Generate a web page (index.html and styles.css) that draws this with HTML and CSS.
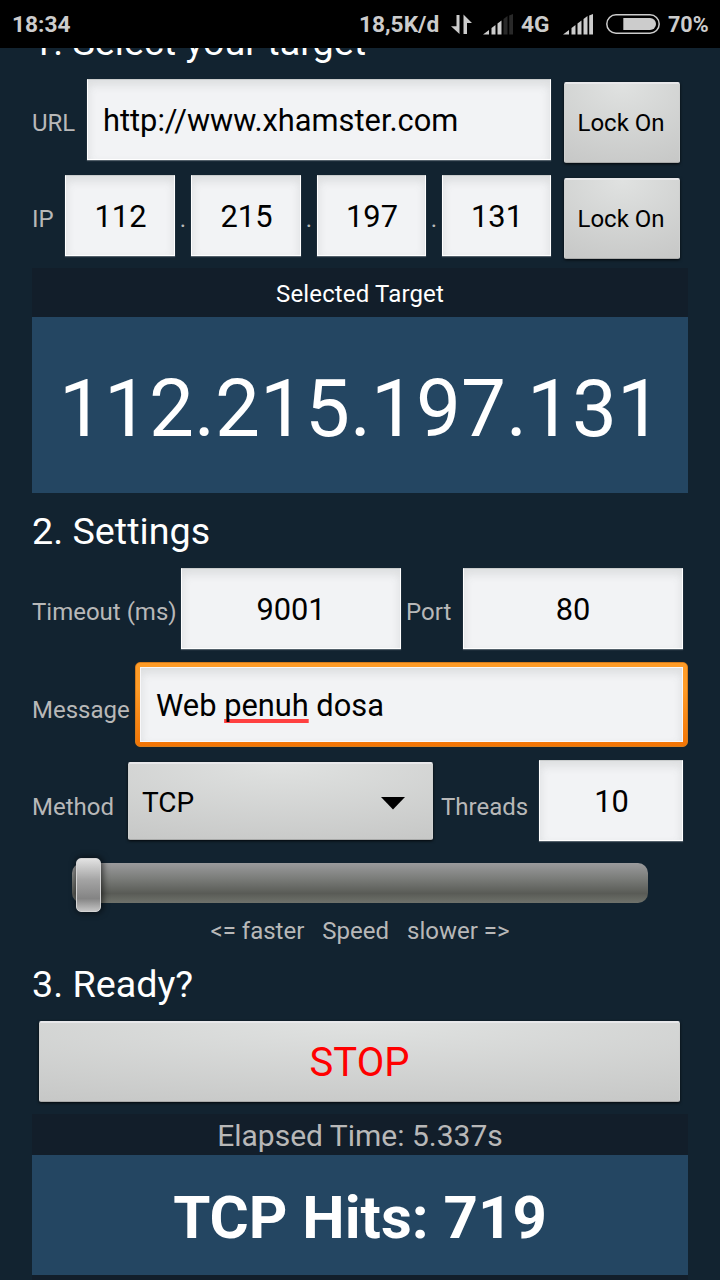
FILE: index.html
```html
<!DOCTYPE html>
<html lang="en">
<head>
<meta charset="utf-8">
<title>Settings</title>
<link rel="stylesheet" href="styles.css">
</head>
<body>
<header class="status">
  <span class="clock">18:34</span>
  <span class="rate">18,5K/d</span>
  <svg class="arrows" width="22" height="22" viewBox="0 0 22 22"><path d="M5.500 1h3v19L0 12.200h5.500zM12.500 20V0.500L21 9h-5v11z" fill="#ccc"/></svg>
  <svg class="signal" width="30" height="22" viewBox="0 0 30 22"><path d="M0 20.500L6 16v4.500zM8.500 14l4-3v9.500h-4zM14.500 9.500l4-3v14h-4z" fill="#ccc"/><path d="M20.500 5l4-3v18.500h-4zM26.200 1.500l3.800-1.500v20.500h-3.800z" fill="#292929"/></svg>
  <span class="net">4G</span>
  <svg class="signal2" width="30" height="22" viewBox="0 0 30 22"><path d="M0 20.500L6 16v4.500zM8.500 14l4-3v9.500h-4zM14.500 9.500l4-3v14h-4zM20.500 5l4-3v18.500h-4zM26.200 1.500l3.800-1.500v20.500h-3.800z" fill="#ccc"/></svg>
  <svg class="battery" width="54" height="20" viewBox="0 0 54 20"><rect x=".8" y=".8" width="52.400" height="18.400" rx="9.200" fill="none" stroke="#ccc" stroke-width="1.500"/><path d="M17.300 4H44a6 6 0 0 1 0 12H17.300z" fill="#ccc"/></svg>
  <span class="percent">70%</span>
</header>
<main class="page">
  <div class="clip"><h2 class="title title-first">1. Select your target</h2></div>

  <div class="row row-url">
    <label class="label label-url">URL</label>
    <input class="field url" value="http://www.xhamster.com">
    <button class="button lock">Lock On</button>
  </div>

  <div class="row row-ip">
    <label class="label label-ip">IP</label>
    <input class="field octet" value="112"><span class="dot">.</span>
    <input class="field octet" value="215"><span class="dot">.</span>
    <input class="field octet" value="197"><span class="dot">.</span>
    <input class="field octet" value="131">
    <button class="button lock">Lock On</button>
  </div>

  <div class="band band-target">Selected Target</div>
  <div class="panel target">112.215.197.131</div>

  <h2 class="title title-settings">2. Settings</h2>

  <div class="row row-timeout">
    <label class="label label-timeout">Timeout (ms)</label>
    <input class="field number" value="9001">
    <label class="label label-port">Port</label>
    <input class="field number" value="80">
  </div>

  <div class="row row-message">
    <label class="label label-message">Message</label>
    <div class="focus"><div class="field message">Web <span class="spell">penuh</span> dosa</div></div>
  </div>

  <div class="row row-method">
    <label class="label label-method">Method</label>
    <div class="button select"><span>TCP</span><svg class="caret" width="24" height="13" viewBox="0 0 24 13"><path d="M0 0h24L12 12.500z" fill="#000"/></svg></div>
    <label class="label label-threads">Threads</label>
    <input class="field threads" value="10">
  </div>

  <div class="slider"><div class="thumb"></div></div>
  <div class="speed"><span>&lt;= faster</span><span>Speed</span><span>slower =&gt;</span></div>

  <h2 class="title title-ready">3. Ready?</h2>
  <button class="button stop">STOP</button>

  <div class="band band-time">Elapsed Time: 5.337s</div>
  <div class="panel hits">TCP Hits: 719</div>
  <div class="band band-end"></div>
</main>
</body>
</html>
```
FILE: styles.css
```css
* { box-sizing: border-box; }

body {
  margin: 0;
  width: 720px;
  height: 1280px;
  overflow: hidden;
  background: #122330;
  color: #fff;
  font-family: Roboto, sans-serif;
}

.status {
  display: flex;
  align-items: center;
  height: 48px;
  padding: 2px 12px 0;
  background: #000;
  color: #ccc;
  font-size: 22.7px;
  font-weight: 700;
  line-height: 46px;
  white-space: nowrap;
}
.status svg { display: block; flex: none; }
.clock { width: 347px; flex: none; }
.rate { width: 92px; flex: none; }
.arrows { margin-right: 10px; margin-top: -1px; }
.signal { margin-right: 8px; }
.net { width: 42px; flex: none; }
.signal2 { margin-right: 13px; }
.battery { margin-right: 8px; margin-top: -2px; }
.percent { font-size: 21.5px; }

.page { padding: 0 32px; }
.clip { height: 31px; overflow: hidden; }

.title {
  margin: 0;
  font-size: 37.7px;
  font-weight: 400;
  line-height: 44px;
  white-space: nowrap;
}
.title-first { margin-top: -28px; }
.title-settings { margin-top: 16px; }
.title-ready { margin-top: 17px; }

.row { display: flex; align-items: flex-start; }

.label {
  flex: none;
  color: #b8b8b8;
  font-size: 24px;
  line-height: 28px;
  white-space: nowrap;
}

.field {
  display: block;
  flex: none;
  height: 81px;
  margin: 0;
  padding: 2px 0 0;
  border: 1px solid #fff;
  border-top-color: #c9cccc;
  border-radius: 0;
  outline: none;
  background: #f2f3f5;
  box-shadow: inset 0 5px 10px rgba(60, 65, 65, .12), 0 1px 1px rgba(150, 160, 165, .5);
  color: #000;
  font: 400 30.8px/77px Roboto, sans-serif;
  text-align: center;
}

.button {
  display: block;
  flex: none;
  height: 81px;
  margin: 0;
  padding: 0;
  border: 1px solid #d0d1d0;
  border-top: 2px solid #e8e8ea;
  border-bottom-color: #a9aaa9;
  border-radius: 2px;
  background: radial-gradient(ellipse 110% 120% at 50% 0, #e0e2e1, #c5c6c5);
  box-shadow: 0 1px 3px rgba(0, 0, 0, .8);
  color: #000;
  font: 400 24px/78px Roboto, sans-serif;
  text-align: center;
}

.row-url { height: 96px; }
.label-url { width: 55px; margin-top: 30px; }
.url { width: 464px; padding-left: 15px; text-align: left; }
.lock { width: 116px; margin: 3px 0 0 12.5px; padding-right: 1px; }

.row-ip { height: 93px; }
.label-ip { width: 33px; margin-top: 30px; }
.octet { width: 110px; padding-left: 1px; }
.octet:nth-of-type(n+3) { width: 109px; }
.dot {
  flex: none;
  width: 16px;
  margin-top: 30px;
  color: #b8b8b8;
  font-size: 24px;
  line-height: 28px;
  text-align: center;
}

.band { background: #121e2a; text-align: center; }
.band-target { height: 49px; font-size: 24px; line-height: 53px; letter-spacing: .15px; }
.panel { background: #244662; text-align: center; white-space: nowrap; }
.target { height: 176px; padding-left: 1px; font-size: 80px; line-height: 184px; }

.row-timeout { height: 94px; margin-top: 15px; }
.label-timeout { width: 149px; margin-top: 30px; }
.number { width: 220px; }
.label-port { width: 57px; margin-top: 30px; }
.label-port { margin-left: 5px; }

.row-message { height: 98px; }
.label-message { width: 103px; margin-top: 34px; }
.focus {
  width: 553px;
  height: 85px;
  padding: 4px;
  border: 1px solid #d97c18;
  border-radius: 5px;
  background: linear-gradient(#ff9c27 30%, #f27405);
}
.message {
  height: 75px;
  padding-left: 15px;
  border-color: #f8f8fa;
  box-shadow: inset 0 5px 10px rgba(60, 65, 65, .12);
  line-height: 71px;
  text-align: left;
}
.spell {
  text-decoration: underline #ff4040 4px;
  text-underline-offset: 3px;
  text-decoration-skip-ink: none;
}

.row-method { height: 103px; }
.label-method { width: 96px; margin-top: 33px; }
.select {
  display: flex;
  align-items: center;
  justify-content: space-between;
  width: 305px;
  height: 78px;
  margin-top: 2px;
  padding: 2px 27px 0 13px;
  font-size: 28px;
}
.caret { margin-top: 2px; }
.label-threads { width: 98px; margin: 33px 0 0 8px; }
.threads { width: 144px; padding-left: 1px; }

.slider {
  height: 40px;
  margin: 0 40px;
  padding-left: 4px;
  border-radius: 10px;
  background: linear-gradient(#9b9b9d, #7b7d7a 38%, #595b56 76%, #6f726b);
}
.thumb {
  width: 25px;
  height: 54px;
  border: 1px solid #d4d4d4;
  border-radius: 5px;
  background: linear-gradient(#e2e2e2, #a4a4a4 40%, #848484 76%, #c4c4c4);
  box-shadow: 1px 0 6px 1px rgba(0, 0, 0, .6);
  transform: translateY(-5px);
}

.speed {
  display: flex;
  justify-content: center;
  gap: 18px;
  margin-top: 14px;
  color: #b8b8b8;
  font-size: 24px;
  line-height: 28px;
  white-space: nowrap;
}

.stop {
  width: 641px;
  margin: 15px 0 0 7px;
  padding-top: 1px;
  color: #f00;
  font-size: 40px;
}
.band-time { height: 41px; margin-top: 12px; color: #b8b8b8; font-size: 30px; line-height: 43px; }
.hits { height: 120px; font-size: 60px; font-weight: 700; line-height: 126px; }
.band-end { height: 5px; }
```
